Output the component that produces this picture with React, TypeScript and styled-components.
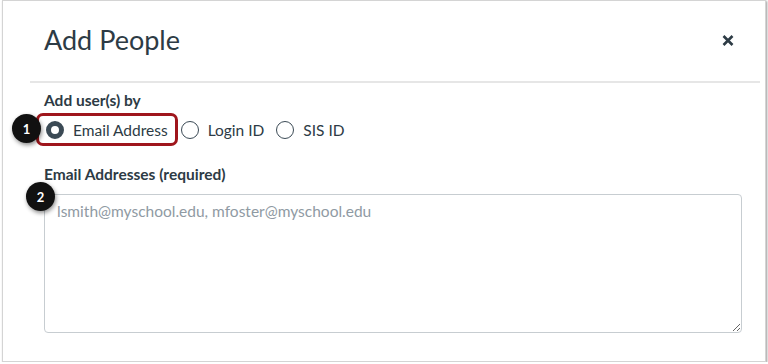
import React from "react";
import styled, { createGlobalStyle } from "styled-components";

const GlobalStyle = createGlobalStyle`
  html, body {
    margin: 0;
    padding: 0;
    background: #ffffff;
  }
  body {
    font-family: Lato, "Liberation Sans", sans-serif;
    color: #2d3b45;
  }
  * {
    box-sizing: border-box;
  }
`;

const Modal = styled.div`
  position: relative;
  margin-left: 2px;
  width: 764px;
  height: 362px;
  background: #ffffff;
  border: 1px solid #d4d4d4;
  box-shadow: 1px 1px 2px rgba(0, 0, 0, 0.4);
`;

const Header = styled.header`
  display: flex;
  align-items: center;
  justify-content: space-between;
  height: 82px;
  margin: 0 5px 0 27px;
  padding: 0 26px 2px 14px;
  border-bottom: 2px solid #e6e6e6;
`;

const Title = styled.h1`
  margin: 0;
  font-size: 27px;
  font-weight: 400;
  line-height: 34px;
  color: #2d3b45;
`;

const CloseButton = styled.button`
  display: flex;
  align-items: center;
  justify-content: center;
  padding: 0;
  border: 0;
  background: none;
  cursor: pointer;
  color: #2d3b45;
`;

const Body = styled.div`
  padding: 7px 0 0 41px;
`;

const Label = styled.div`
  font-size: 15.5px;
  font-weight: 700;
  line-height: 20px;
  color: #2d3b45;
`;

const RadioRow = styled.div`
  display: flex;
  align-items: center;
  margin: 3px 0 18px -8px;
`;

const Option = styled.label<{ $highlighted?: boolean }>`
  display: flex;
  align-items: center;
  gap: 9px;
  height: 33px;
  font-size: 15.5px;
  color: #2d3b45;
  ${({ $highlighted }) =>
    $highlighted
      ? `
    padding: 0 7px;
    border: 3px solid #9f161c;
    border-radius: 7px;
    margin-right: 3px;
  `
      : `
    margin-right: 12px;
  `}
`;

const Radio = styled.span<{ $checked?: boolean }>`
  width: 18px;
  height: 18px;
  border-radius: 50%;
  background: #ffffff;
  border: ${({ $checked }) => ($checked ? "5px solid #3b4a55" : "1.5px solid #3b4a55")};
`;

const FieldLabel = styled(Label)`
  margin-bottom: 10px;
`;

const TextArea = styled.textarea`
  display: block;
  width: 698px;
  height: 139px;
  padding: 6px 12px;
  border: 1px solid #c7cdd1;
  border-radius: 4px;
  font-family: Lato, "Liberation Sans", sans-serif;
  font-size: 15.5px;
  line-height: 20px;
  color: #2d3b45;
  resize: vertical;
  outline: none;

  &::placeholder {
    color: #8f9aa3;
  }
`;

const Badge = styled.span<{ $x: number; $y: number }>`
  position: absolute;
  left: ${({ $x }) => $x}px;
  top: ${({ $y }) => $y}px;
  width: 29px;
  height: 29px;
  border-radius: 50%;
  background: #111111;
  color: #ffffff;
  font-size: 13px;
  font-weight: 700;
  display: flex;
  align-items: center;
  justify-content: center;
  box-shadow: 1px 2px 4px rgba(0, 0, 0, 0.45);
`;

export default function App() {
  return (
    <>
      <GlobalStyle />
      <Modal>
        <Header>
          <Title>Add People</Title>
          <CloseButton aria-label="Close">
            <svg width="12" height="11" viewBox="0 0 12 11">
              <path d="M1.5 1 L10.5 10 M10.5 1 L1.5 10" stroke="currentColor" strokeWidth="2.6" strokeLinecap="butt" />
            </svg>
          </CloseButton>
        </Header>
        <Body>
          <Label>Add user(s) by</Label>
          <RadioRow>
            <Option $highlighted>
              <Radio $checked />
              Email Address
            </Option>
            <Option>
              <Radio />
              Login ID
            </Option>
            <Option>
              <Radio />
              SIS ID
            </Option>
          </RadioRow>
          <FieldLabel>Email Addresses (required)</FieldLabel>
          <TextArea placeholder="lsmith@myschool.edu, mfoster@myschool.edu" />
        </Body>
        <Badge $x={9} $y={113}>1</Badge>
        <Badge $x={23} $y={181}>2</Badge>
      </Modal>
    </>
  );
}
